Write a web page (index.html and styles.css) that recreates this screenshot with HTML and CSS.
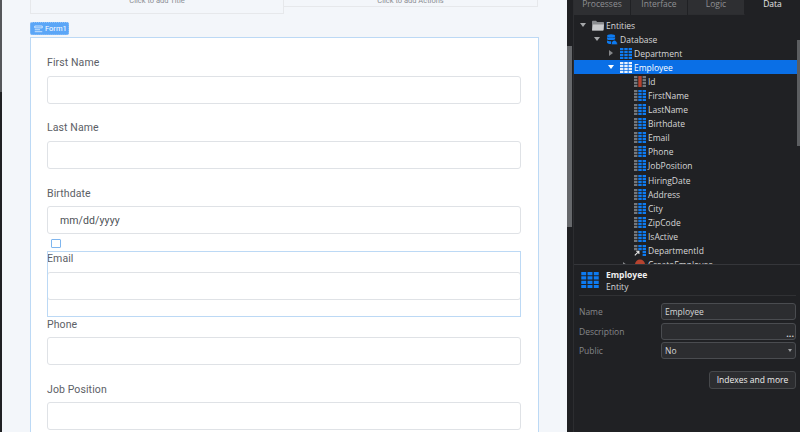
FILE: index.html
```html
<!DOCTYPE html>
<html lang="en">
<head>
<meta charset="utf-8">
<title>Employee form</title>
<link rel="stylesheet" href="styles.css">
</head>
<body>
<svg class="defs" width="0" height="0" aria-hidden="true">
  <symbol id="table" viewBox="0 0 12 11">
    <path class="blue" d="M0 0h3.4v2.2H0zM4.3 0h3.4v2.2H4.3zM8.6 0H12v2.2H8.6zM0 3h3.4v2.2H0zM4.3 3h3.4v2.2H4.3zM8.6 3H12v2.2H8.6zM0 6h3.4v2.2H0zM4.3 6h3.4v2.2H4.3zM8.6 6H12v2.2H8.6zM0 9h3.4v2H0zM4.3 9h3.4v2H4.3zM8.6 9H12v2H8.6z"/>
  </symbol>
  <symbol id="tablew" viewBox="0 0 12 11">
    <path fill="#e8f1fd" d="M0 0h3.4v2.2H0zM4.3 0h3.4v2.2H4.3zM8.6 0H12v2.2H8.6zM0 3h3.4v2.2H0zM4.3 3h3.4v2.2H4.3zM8.6 3H12v2.2H8.6zM0 6h3.4v2.2H0zM4.3 6h3.4v2.2H4.3zM8.6 6H12v2.2H8.6zM0 9h3.4v2H0zM4.3 9h3.4v2H4.3zM8.6 9H12v2H8.6z"/>
  </symbol>
  <symbol id="attr" viewBox="0 0 12 11">
    <path fill="#75787c" d="M0 0h3.4v2.2H0zM0 3h3.4v2.2H0zM0 6h3.4v2.2H0zM0 9h3.4v2H0z"/>
    <path class="blue" d="M4.3 0h3.4v2.2H4.3zM8.6 0H12v2.2H8.6zM4.3 3h3.4v2.2H4.3zM8.6 3H12v2.2H8.6zM4.3 6h3.4v2.2H4.3zM8.6 6H12v2.2H8.6zM4.3 9h3.4v2H4.3zM8.6 9H12v2H8.6z"/>
  </symbol>
  <symbol id="key" viewBox="0 0 12 11">
    <path fill="#75787c" d="M0 0h3.4v2.2H0zM0 3h3.4v2.2H0zM0 6h3.4v2.2H0zM0 9h3.4v2H0zM8.6 0H12v2.2H8.6zM8.6 3H12v2.2H8.6zM8.6 6H12v2.2H8.6zM8.6 9H12v2H8.6z"/>
    <path fill="#b5432f" d="M4.3 0h3.4v11H4.3z"/>
  </symbol>
  <symbol id="fk" viewBox="0 0 12 11">
    <path class="blue" d="M4.3 0h3.4v2.2H4.3zM8.6 0H12v2.2H8.6zM4.3 3h3.4v2.2H4.3zM8.6 3H12v2.2H8.6zM8.6 6H12v2.2H8.6zM8.6 9H12v2H8.6z"/>
    <path fill="#75787c" d="M0 0h3.4v2.2H0zM0 3h3.4v2.2H0z"/>
    <path fill="none" stroke="#e6e6e6" stroke-width="1.1" d="M.8 10.4 4.6 6.6M2.2 6.3h2.7V9"/>
  </symbol>
</svg>

<div class="app">
  <div class="edge"></div>

  <main class="canvas">
    <div class="header-row">
      <div class="placeholder title-slot">Click to add Title</div>
      <div class="placeholder actions-slot">Click to add Actions</div>
    </div>
    <div class="form-tag">
      <svg class="form-icon" viewBox="0 0 12 10"><path fill="none" stroke="#fff" stroke-width=".9" d="M1 1h10v2.5H1zM1 6h7M1 8.6h10"/></svg>
      <span>Form1</span>
    </div>
    <form class="form">
      <div class="field"><div class="label">First Name</div><div class="input"></div></div>
      <div class="field"><div class="label">Last Name</div><div class="input"></div></div>
      <div class="field date-field">
        <div class="label">Birthdate</div>
        <div class="input date">mm/dd/yyyy</div>
        <div class="check"></div>
      </div>
      <div class="field selected"><div class="label">Email</div><div class="input"></div></div>
      <div class="field"><div class="label">Phone</div><div class="input"></div></div>
      <div class="field"><div class="label">Job Position</div><div class="input"></div></div>
    </form>
  </main>

  <div class="vscroll"><div class="vthumb"></div></div>

  <aside class="side">
    <nav class="tabs">
      <div class="tab t1">Processes</div>
      <div class="tab t2">Interface</div>
      <div class="tab t3">Logic</div>
      <div class="tab active">Data</div>
    </nav>

    <div class="tree">
      <div class="tree-thumb"></div>
      <div class="row l0"><i class="arrow down"></i>
        <svg class="ico" viewBox="0 0 12 10"><path fill="#8a8c8f" d="M0 1.2C0 .6.4.2 1 .2h3l1.2 1.3H11c.6 0 1 .4 1 1V9c0 .6-.4 1-1 1H1c-.6 0-1-.4-1-1z"/><path fill="#c9cacc" d="M1 4h11l-1 6H0z"/></svg>
        <span>Entities</span></div>
      <div class="row l1"><i class="arrow down"></i>
        <svg class="ico" viewBox="0 0 12 12"><ellipse class="blue" cx="5" cy="2.2" rx="4.4" ry="2"/><path class="blue" d="M.6 3.4c1 1.4 7.800 1.400 8.800 0v2.200c-1 1.400-7.800 1.400-8.800 0z"/><path class="blue" d="M.6 6.800c.8 1 3 1.300 4.400 1.100V11C3 11 1 10.500.6 9.500z"/><path fill="#0d7bf2" stroke="#202124" stroke-width=".7" d="M5.500 11.600V9.200a1.600 1.600 0 0 1 1.500-1.600 2 2 0 0 1 3.600.6 1.700 1.700 0 0 1 1.200 1.600v1.800z"/></svg>
        <span>Database</span></div>
      <div class="row l2"><i class="arrow right"></i><svg class="ico"><use href="#table"/></svg><span>Department</span></div>
      <div class="row l2 current"><i class="arrow down"></i><svg class="ico"><use href="#tablew"/></svg><span>Employee</span></div>
      <div class="row l3"><i class="arrow none"></i><svg class="ico"><use href="#key"/></svg><span>Id</span></div>
      <div class="row l3"><i class="arrow none"></i><svg class="ico"><use href="#attr"/></svg><span>FirstName</span></div>
      <div class="row l3"><i class="arrow none"></i><svg class="ico"><use href="#attr"/></svg><span>LastName</span></div>
      <div class="row l3"><i class="arrow none"></i><svg class="ico"><use href="#attr"/></svg><span>Birthdate</span></div>
      <div class="row l3"><i class="arrow none"></i><svg class="ico"><use href="#attr"/></svg><span>Email</span></div>
      <div class="row l3"><i class="arrow none"></i><svg class="ico"><use href="#attr"/></svg><span>Phone</span></div>
      <div class="row l3"><i class="arrow none"></i><svg class="ico"><use href="#attr"/></svg><span>JobPosition</span></div>
      <div class="row l3"><i class="arrow none"></i><svg class="ico"><use href="#attr"/></svg><span>HiringDate</span></div>
      <div class="row l3"><i class="arrow none"></i><svg class="ico"><use href="#attr"/></svg><span>Address</span></div>
      <div class="row l3"><i class="arrow none"></i><svg class="ico"><use href="#attr"/></svg><span>City</span></div>
      <div class="row l3"><i class="arrow none"></i><svg class="ico"><use href="#attr"/></svg><span>ZipCode</span></div>
      <div class="row l3"><i class="arrow none"></i><svg class="ico"><use href="#attr"/></svg><span>IsActive</span></div>
      <div class="row l3"><i class="arrow none"></i><svg class="ico"><use href="#fk"/></svg><span>DepartmentId</span></div>
      <div class="row l3"><i class="arrow right"></i>
        <svg class="ico" viewBox="0 0 12 11"><circle cx="6" cy="5.500" r="5" fill="#b5432f"/></svg>
        <span>CreateEmployee</span></div>
    </div>

    <section class="props">
      <header class="props-head">
        <svg class="big-icon"><use href="#table"/></svg>
        <div class="props-title"><strong>Employee</strong><span>Entity</span></div>
      </header>
      <div class="prop"><label>Name</label><div class="box">Employee</div></div>
      <div class="prop"><label>Description</label><div class="box more"><span class="dots">...</span></div></div>
      <div class="prop"><label>Public</label><div class="box select">No<i class="caret"></i></div></div>
      <div class="actions"><div class="btn">Indexes and more</div></div>
    </section>
  </aside>
</div>
</body>
</html>
```

FILE: styles.css
```css
* { box-sizing: border-box; }

html, body {
  margin: 0;
  height: 100%;
  overflow: hidden;
}

.defs { position: absolute; }

.blue { fill: #0d7bf2; }

.app {
  display: flex;
  width: 800px;
  height: 432px;
  overflow: hidden;
  background: #1f2023;
}

.edge {
  flex: 0 0 2px;
  background: linear-gradient(#55575a 0 92px, #1f2023 92px);
}

/* Canvas */
.canvas {
  flex: 0 0 565px;
  height: 432px;
  overflow: hidden;
  padding-left: 28px;
  background: #f3f6fa;
  font-family: Roboto, "Liberation Sans", sans-serif;
  color: #5c6066;
}

.header-row {
  display: flex;
  width: 508px;
  height: 15px;
  margin-top: -1px;
  font-size: 7.500px;
  color: #8a8d92;
  text-align: center;
}

.placeholder { line-height: 4px; }

.title-slot {
  width: 254px;
  height: 15px;
  border: 1px solid #e6e8eb;
  border-top: 0;
}

.actions-slot {
  width: 254px;
  height: 8px;
  border: 1px solid #e6e8eb;
  border-width: 0 1px 1px 0;
}

.form-tag {
  display: flex;
  align-items: center;
  gap: 2px;
  width: 39px;
  height: 13px;
  margin-top: 8px;
  padding-left: 3px;
  border: 1px dotted #8fc1f8;
  border-radius: 2px;
  background: #5ba6f7;
  color: #fff;
  font-size: 7.500px;
}

.form-icon { width: 9px; height: 8px; flex: none; }

.form {
  width: 509px;
  height: 420px;
  margin-top: 2px;
  padding: 15px 17px 0 16px;
  border: 1px solid #bcd9f5;
  background: #fff;
}

.field {
  position: relative;
  height: 65.400px;
}

.label {
  height: 20px;
  font-size: 10.500px;
  line-height: 20px;
  letter-spacing: .1px;
}

.input {
  height: 28px;
  margin-top: 2.500px;
  border: 1px solid #dfe2e6;
  border-radius: 3px;
  background: #fff;
}

.date {
  padding-left: 12px;
  font-size: 10.500px;
  line-height: 27px;
  letter-spacing: .1px;
  color: #4d5156;
}

.check {
  position: absolute;
  left: 4px;
  top: 55px;
  width: 9.500px;
  height: 9.500px;
  border: 1px solid #7fb6ef;
  border-radius: 1px;
}

.selected {
  margin: 2px 0 -2px;
  outline: 1px solid #bcd9f5;
  outline-offset: -1px;
}

.selected .label {
  height: 15px;
  line-height: 15px;
}

.selected .input {
  margin-top: 6px;
}

/* Page scrollbar */
.vscroll {
  flex: 0 0 6px;
  background: #1f2023;
}

.vthumb {
  width: 5px;
  height: 181px;
  margin: 46px 0 0 0;
  background: #66686b;
}

/* Side panel */
.side {
  flex: 0 0 227px;
  display: flex;
  flex-direction: column;
  height: 432px;
  border-left: 1px solid #2c2d30;
  background: #202124;
  font-family: "Open Sans", "Noto Sans", sans-serif;
  font-size: 8.500px;
  color: #d6d7d8;
}

.tabs {
  display: flex;
  flex: 0 0 15px;
  align-items: stretch;
}

.tab {
  border-right: 1px solid #202124;
  background: #2e2f32;
  color: #8e9093;
  text-align: center;
  line-height: 8px;
  font-size: 8.500px;
}

.t1 { width: 57px; }
.t2 { width: 57px; }
.t3 { width: 57px; border-bottom: 1px solid #2c2d30; }
.tab.active {
  flex: 1;
  background: #202124;
  color: #e6e6e6;
  border: 0;
}

.tree {
  position: relative;
  height: 249px;
  padding-top: 3px;
  overflow: hidden;
}

.tree-thumb {
  position: absolute;
  top: 25px;
  right: 0;
  width: 3px;
  height: 106px;
  background: #5c5e61;
}

.row {
  display: flex;
  align-items: center;
  height: 14.100px;
  white-space: nowrap;
}

.l0 { padding-left: 4px; }
.l1 { padding-left: 18px; }
.l2 { padding-left: 32px; }
.l3 { padding-left: 46px; }

.current {
  background: #0a6fe6;
  color: #fff;
}

.arrow {
  position: relative;
  flex: 0 0 10px;
  height: 8px;
}

.arrow::after {
  content: "";
  position: absolute;
}

.down::after {
  left: 2px;
  top: 2px;
  border-style: solid;
  border-width: 4px 3px 0;
  border-color: #a5a7a9 transparent transparent;
}

.current .down::after { border-top-color: #fff; }

.right::after {
  left: 3px;
  top: 1px;
  border-style: solid;
  border-width: 3px 0 3px 4px;
  border-color: transparent transparent transparent #85878a;
}

.ico {
  flex: 0 0 12px;
  width: 12px;
  height: 11px;
  margin: 0 2px 0 4px;
}

.props {
  flex: 1;
  padding: 0 4px 0 5px;
  border-top: 1px solid #35363a;
  background: #202124;
  position: relative;
}

.props-head {
  display: flex;
  align-items: center;
  height: 31px;
  margin-top: 0;
  padding-left: 1px;
  border-bottom: 1px solid #303134;
}

.big-icon {
  flex: none;
  width: 20px;
  height: 16px;
  margin-right: 6px;
}

.props-title {
  display: flex;
  flex-direction: column;
  line-height: 11.500px;
  padding-top: 1px;
}

.props-title strong {
  color: #f0f0f0;
  font-weight: 700;
}

.prop {
  display: flex;
  align-items: center;
  height: 19.600px;
}

.props-head + .prop { margin-top: 6px; }

.prop label {
  flex: 0 0 82px;
  color: #85878a;
}

.box {
  flex: 1;
  height: 17px;
  position: relative;
  padding-left: 3px;
  border: 1px solid #4a4c50;
  border-radius: 3px;
  background: #2c2d30;
  color: #d6d7d8;
  line-height: 15px;
}

.dots {
  position: absolute;
  right: 1px;
  bottom: 1px;
  font-size: 9px;
  font-weight: 700;
  line-height: 8px;
  color: #d0d0d0;
}

.caret {
  position: absolute;
  right: 3px;
  top: 6px;
  border-style: solid;
  border-width: 3px 2px 0;
  border-color: #9a9c9f transparent transparent;
}

.actions {
  display: flex;
  justify-content: flex-end;
  margin-top: 10px;
}

.btn {
  width: 87px;
  height: 18px;
  border: 1px solid #46484b;
  border-radius: 3px;
  background: #2c2d30;
  color: #eeeeee;
  font-weight: 500;
  text-align: center;
  line-height: 16px;
}
```
